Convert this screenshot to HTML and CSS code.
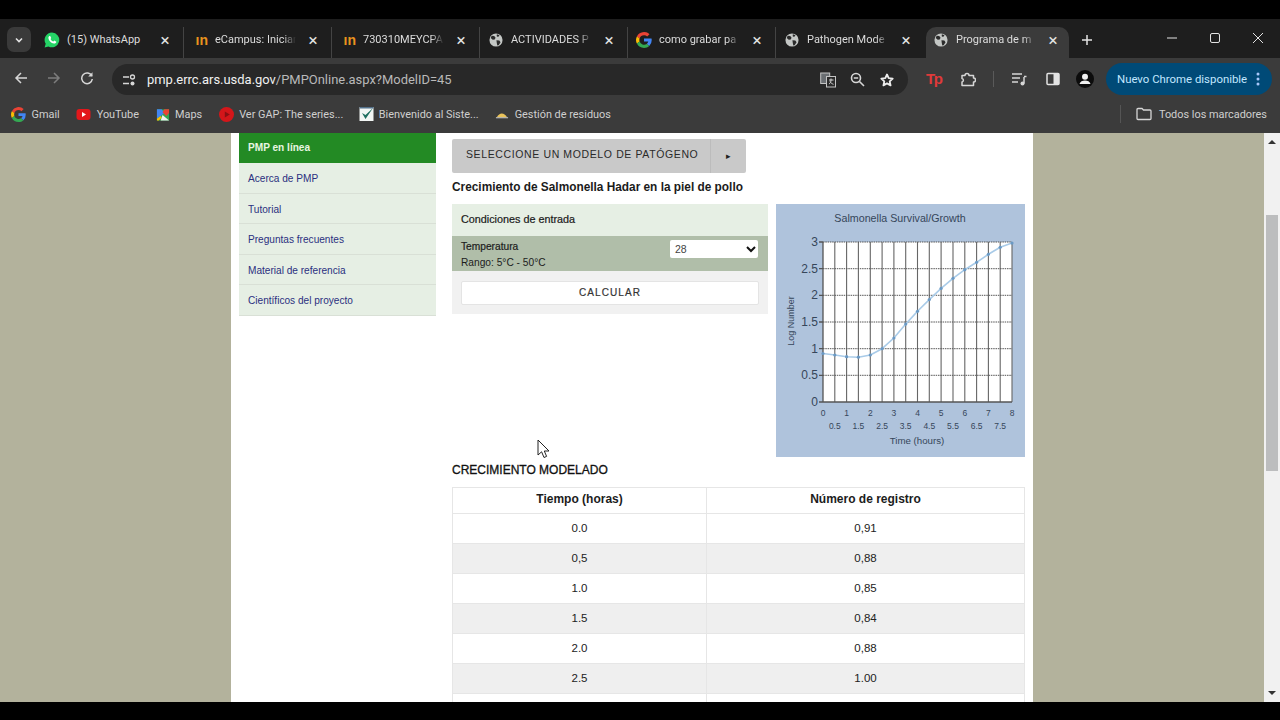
FILE: index.html
```html
<!DOCTYPE html>
<html lang="es">
<head>
<meta charset="utf-8">
<title>Programa de modelado de patógenos</title>
<link rel="stylesheet" href="styles.css">
</head>
<body>
<svg class="defs" width="0" height="0" aria-hidden="true">
  <defs>
    <symbol id="globe" viewBox="0 0 16 16">
      <circle cx="8" cy="8" r="7.5" fill="#c4c7c5"/>
      <path d="M3 3.200l3 .3 1.500 1.800-1 2-2.200.3L2 5.600zM9 1.500l3 1.200-1.600 2-1.600-1zM8.500 8.300l3.300.4 1.400 1.800-2.200 3.500-1.500.3-.6-3z" fill="#2b2b2b"/>
    </symbol>
    <symbol id="g" viewBox="0 0 16 16">
      <path d="M8 3.300a4.700 4.700 0 0 1 3.200 1.200l2.300-2.300A8 8 0 0 0 .9 4.400l2.700 2.100A4.800 4.800 0 0 1 8 3.300z" fill="#ea4335"/>
      <path d="M15.700 8.200c0-.6 0-1.100-.2-1.600H8v3h4.300a3.700 3.700 0 0 1-1.600 2.400l2.600 2a7.800 7.800 0 0 0 2.400-5.800z" fill="#4285f4"/>
      <path d="M3.600 9.500a4.800 4.800 0 0 1 0-3L.9 4.400a8 8 0 0 0 0 7.200z" fill="#fbbc05"/>
      <path d="M8 16c2.200 0 4-.7 5.300-2l-2.600-2a4.800 4.800 0 0 1-7.100-2.500L.9 11.600A8 8 0 0 0 8 16z" fill="#34a853"/>
    </symbol>
  </defs>
</svg>

<div class="topband"></div>

<header class="chrome">
  <div class="tabstrip">
    <button class="tablist" aria-label="Lista de pestañas">
      <svg width="10" height="10" viewBox="0 0 10 10"><path d="M2 3.500l3 3 3-3" fill="none" stroke="#e3e3e3" stroke-width="1.600"/></svg>
    </button>
    <div class="tab">
      <svg class="ficon" width="16" height="16" viewBox="0 0 16 16"><path d="M8 .5a7.400 7.400 0 0 0-6.300 11.200L.6 15.500l3.900-1A7.400 7.400 0 1 0 8 .5z" fill="#25d366"/><path d="M5.500 3.900c-.5.300-1.200 1-1.100 2.200.1 1.600 1.400 3.300 2.700 4.300 1.400 1 2.900 1.500 3.900 1 .9-.4 1.300-1.100 1.300-1.700l-2-1.100-.9 1c-1-.3-2.300-1.400-2.900-2.700l.7-.9-1-2.100z" fill="#fff"/></svg>
      <span class="tabname tabname-full">(15) WhatsApp</span><span class="x">×</span>
    </div>
    <div class="tab">
      <span class="inlogo">ın</span>
      <span class="tabname">eCampus: Iniciar</span><span class="x">×</span>
    </div>
    <div class="tab">
      <span class="inlogo">ın</span>
      <span class="tabname">730310MEYCPA</span><span class="x">×</span>
    </div>
    <div class="tab">
      <svg class="ficon ficon-globe" width="14" height="14"><use href="#globe"/></svg>
      <span class="tabname">ACTIVIDADES P</span><span class="x">×</span>
    </div>
    <div class="tab">
      <svg class="ficon" width="16" height="16"><use href="#g"/></svg>
      <span class="tabname">como grabar pa</span><span class="x">×</span>
    </div>
    <div class="tab tab-last">
      <svg class="ficon ficon-globe" width="14" height="14"><use href="#globe"/></svg>
      <span class="tabname">Pathogen Mode</span><span class="x">×</span>
    </div>
    <div class="tab tab-active">
      <svg class="ficon ficon-globe" width="14" height="14"><use href="#globe"/></svg>
      <span class="tabname">Programa de m</span><span class="x">×</span>
    </div>
    <svg class="plus" width="12" height="12" viewBox="0 0 12 12"><path d="M6 1v10M1 6h10" stroke="#e3e3e3" stroke-width="1.500"/></svg>
    <div class="winctl">
      <svg width="12" height="12" viewBox="0 0 12 12"><path d="M1 6h10" stroke="#e3e3e3"/></svg>
      <svg width="12" height="12" viewBox="0 0 12 12"><rect x="1.500" y="1.500" width="9" height="9" rx="1.500" fill="none" stroke="#e3e3e3"/></svg>
      <svg width="12" height="12" viewBox="0 0 12 12"><path d="M1 1l10 10M11 1L1 11" stroke="#e3e3e3"/></svg>
    </div>
  </div>

  <div class="toolbar">
    <div class="navbtns">
      <svg width="14" height="14" viewBox="0 0 14 14"><path d="M13 7H2M7 2L2 7l5 5" fill="none" stroke="#d6d6d6" stroke-width="1.500"/></svg>
      <svg width="14" height="14" viewBox="0 0 14 14"><path d="M1 7h11M7 2l5 5-5 5" fill="none" stroke="#7d7d7d" stroke-width="1.500"/></svg>
      <svg width="14" height="14" viewBox="0 0 14 14"><path d="M11.800 5A5.300 5.300 0 1 0 12.300 8" fill="none" stroke="#d6d6d6" stroke-width="1.500"/><path d="M12.500 1.200v4.300H8.200z" fill="#d6d6d6"/></svg>
    </div>
    <div class="omnibox">
      <span class="tune"><svg width="16" height="16" viewBox="0 0 16 16"><path d="M2 5h6M2 11.500h6" stroke="#d6d6d6" stroke-width="1.500" fill="none"/><circle cx="11.500" cy="5" r="2" fill="none" stroke="#d6d6d6" stroke-width="1.300"/><circle cx="11.500" cy="11.500" r="2" fill="#d6d6d6"/></svg></span>
      <span class="url"><span class="host">pmp.errc.ars.usda.gov</span>/PMPOnline.aspx?ModelID=45</span>
      <div class="omni-actions">
        <svg width="16" height="16" viewBox="0 0 16 16"><rect x=".7" y="1" width="9" height="10.500" fill="#6a6e72" stroke="#c4c4c4"/><rect x="6.500" y="4.500" width="9" height="10.500" fill="#2b2b2b" stroke="#c4c4c4"/><path d="M9 8h4.500M11 6.500V8c0 2-1 3.500-2 4M10 9.500c.6 1.200 2 2.300 3.500 2.800" stroke="#d6d6d6" fill="none"/></svg>
        <svg width="15" height="15" viewBox="0 0 15 15"><circle cx="6" cy="6" r="4.500" fill="none" stroke="#d6d6d6" stroke-width="1.600"/><path d="M9.500 9.500l4.500 4.500M3.800 6h4.400" stroke="#d6d6d6" stroke-width="1.600"/></svg>
        <svg width="16" height="16" viewBox="0 0 16 16"><path d="M8 2.500l1.700 3.700 4 .4-3 2.800.9 4L8 11.400l-3.600 2 .9-4-3-2.800 4-.4z" fill="none" stroke="#ececec" stroke-width="1.800" stroke-linejoin="round"/></svg>
      </div>
    </div>
    <div class="exts">
      <span class="tp">Tp</span>
      <svg class="ext-puzzle" width="16" height="16" viewBox="0 0 16 16"><path d="M2 4.500h3a2 2 0 0 1 4 0h4.500V7a2 2 0 0 1 0 4v3.500H2V11a1.800 1.800 0 0 0 0-3.500z" fill="none" stroke="#d6d6d6" stroke-width="1.500" stroke-linejoin="round"/></svg>
      <span class="sep"></span>
      <svg class="ext-media" width="16" height="16" viewBox="0 0 16 16"><path d="M1 3h10M1 7h8M1 11h6" stroke="#d6d6d6" stroke-width="1.500"/><path d="M13 6v6.500" stroke="#d6d6d6" stroke-width="1.500"/><circle cx="11.500" cy="12.500" r="2" fill="#d6d6d6"/><path d="M13 5.500h2.500" stroke="#d6d6d6" stroke-width="1.500"/></svg>
      <svg class="ext-side" width="16" height="16" viewBox="0 0 16 16"><rect x="2" y="2.500" width="12" height="11" rx="1" fill="none" stroke="#e3e3e3" stroke-width="1.500"/><rect x="8.500" y="2.500" width="5.500" height="11" fill="#e3e3e3"/></svg>
      <svg class="ext-avatar" width="18" height="18" viewBox="0 0 18 18"><circle cx="9" cy="9" r="9" fill="#0c0c0c"/><circle cx="9" cy="6.800" r="3" fill="#f0f0f0"/><path d="M3.500 14c.5-2.600 3-3.600 5.500-3.600s5 1 5.500 3.600z" fill="#f0f0f0"/></svg>
    </div>
    <div class="update">
      <span>Nuevo Chrome disponible</span>
      <svg width="4" height="14" viewBox="0 0 4 14"><circle cx="2" cy="2" r="1.500" fill="#a8c7fa"/><circle cx="2" cy="7" r="1.500" fill="#a8c7fa"/><circle cx="2" cy="12" r="1.500" fill="#a8c7fa"/></svg>
    </div>
  </div>

  <div class="bookmarks">
    <a class="bm bm-gmail"><svg width="15" height="15"><use href="#g"/></svg>Gmail</a>
    <a class="bm"><svg width="15" height="15" viewBox="0 0 15 15"><rect x=".5" y="2" width="14" height="11" rx="3" fill="#e3171b"/><path d="M6 5l4 2.500L6 10z" fill="#fff"/></svg>YouTube</a>
    <a class="bm"><svg width="14" height="15" viewBox="0 0 15 15"><path d="M1 2h13v12H1z" fill="#34a853"/><path d="M1 2h5l3 4-8 6z" fill="#4285f4"/><path d="M9 2h5v4l-3 3-4-4z" fill="#ea4335"/><path d="M7 8l7 6H5z" fill="#f1f1f1"/><path d="M1 12l4-3 1 2-3 3H1z" fill="#fbbc05"/></svg>Maps</a>
    <a class="bm"><svg width="15" height="15" viewBox="0 0 15 15"><circle cx="7.500" cy="7.500" r="7.500" fill="#d4161a"/><path d="M5.800 4.500l5 3-5 3z" fill="#8a1013"/></svg>Ver GAP: The series...</a>
    <a class="bm bm-check"><svg width="15" height="16" viewBox="0 0 15 16"><rect x=".5" y="1" width="14" height="14" fill="#f2f6f4"/><path d="M3 7l3.500 6L14 2l-7.500 7z" fill="#1f6f60"/><path d="M.5 1h14v1.500H.5z" fill="#52708a"/></svg>Bienvenido al Siste...</a>
    <a class="bm"><svg width="14" height="15" viewBox="0 0 15 15"><path d="M2 10.500c1.500-2.800 3.200-4 5.300-4s3.800 1.200 5.700 4z" fill="#e8c25a"/><path d="M1 10.500h13v1H1z" fill="#d8d8d8"/></svg>Gestión de residuos</a>
    <div class="allbm">
      <span class="sep"></span>
      <a class="bm bm-all"><svg width="16" height="14" viewBox="0 0 16 14"><path d="M1 2.500A1 1 0 0 1 2 1.500h4l1.500 1.500H14a1 1 0 0 1 1 1v7.500a1 1 0 0 1-1 1H2a1 1 0 0 1-1-1z" fill="none" stroke="#d6d6d6" stroke-width="1.300"/></svg>Todos los marcadores</a>
    </div>
  </div>
</header>

<div class="viewport">
  <div class="pagebg">
    <div class="page">
      <nav class="sidebar">
        <a class="side-item side-active">PMP en línea</a>
        <a class="side-item">Acerca de PMP</a>
        <a class="side-item">Tutorial</a>
        <a class="side-item">Preguntas frecuentes</a>
        <a class="side-item">Material de referencia</a>
        <a class="side-item">Científicos del proyecto</a>
      </nav>
      <main class="content">
        <div class="modelbtn">
          <span class="modelbtn-label">SELECCIONE UN MODELO DE PATÓGENO</span>
          <span class="modelbtn-arrow">▸</span>
        </div>
        <h1 class="title">Crecimiento de Salmonella Hadar en la piel de pollo</h1>
        <div class="workarea">
          <section class="inputs">
            <div class="inputs-head">Condiciones de entrada</div>
            <div class="temp-row">
              <div class="temp-label"><b>Temperatura</b><span>Rango: 5°C - 50°C</span></div>
              <div class="fake-select">28
                <svg width="10" height="7" viewBox="0 0 10 7"><path d="M1 1l4 4 4-4" fill="none" stroke="#111" stroke-width="2"/></svg>
              </div>
            </div>
            <div class="calc-wrap"><button class="calc">CALCULAR</button></div>
          </section>
          <figure class="chart">
            <svg width="249" height="253" viewBox="0 0 249 253">
              <rect x="47" y="38" width="189" height="160" fill="#fff"/>
              <path class="gridv" d="M58.800 38V198M70.600 38V198M82.400 38V198M94.300 38V198M106.100 38V198M117.900 38V198M129.700 38V198M141.500 38V198M153.300 38V198M165.100 38V198M177 38V198M188.800 38V198M200.600 38V198M212.400 38V198M224.200 38V198M236 38V198"/>
              <path class="gridh" d="M47 38H236M47 64.700H236M47 91.300H236M47 118H236M47 144.700H236M47 171.300H236"/>
              <path class="axis" d="M47 38V198H236M43 38H47M43 64.700H47M43 91.300H47M43 118H47M43 144.700H47M43 171.300H47M43 198H47"/>
              <polyline class="curve" points="47,149.500 58.800,151 70.600,152.700 82.400,153.200 94.300,151 106.100,144.700 117.900,134 129.700,120.100 141.500,107.300 153.300,95.600 165.100,84.400 177,74.300 188.800,65.700 200.600,58.300 212.400,50.300 224.200,43.300 236,39.100"/>
              <g class="dots">
                <circle cx="47" cy="149.500" r="1.600"/><circle cx="58.800" cy="151" r="1.600"/><circle cx="70.600" cy="152.700" r="1.600"/><circle cx="82.400" cy="153.200" r="1.600"/><circle cx="94.300" cy="151" r="1.600"/><circle cx="106.100" cy="144.700" r="1.600"/><circle cx="117.900" cy="134" r="1.600"/><circle cx="129.700" cy="120.100" r="1.600"/><circle cx="141.500" cy="107.300" r="1.600"/><circle cx="153.300" cy="95.600" r="1.600"/><circle cx="165.100" cy="84.400" r="1.600"/><circle cx="177" cy="74.300" r="1.600"/><circle cx="188.800" cy="65.700" r="1.600"/><circle cx="200.600" cy="58.300" r="1.600"/><circle cx="212.400" cy="50.300" r="1.600"/><circle cx="224.200" cy="43.300" r="1.600"/><circle cx="236" cy="39.100" r="1.600"/>
              </g>
              <text class="c-title" x="124" y="18">Salmonella Survival/Growth</text>
              <g class="c-yt">
                <text x="42" y="42">3</text><text x="42" y="68.500">2.5</text><text x="42" y="95">2</text><text x="42" y="122">1.5</text><text x="42" y="148.500">1</text><text x="42" y="175">0.5</text><text x="42" y="202">0</text>
              </g>
              <g class="c-xt">
                <text x="47" y="212">0</text><text x="70.600" y="212">1</text><text x="94.300" y="212">2</text><text x="117.900" y="212">3</text><text x="141.500" y="212">4</text><text x="165.100" y="212">5</text><text x="188.800" y="212">6</text><text x="212.400" y="212">7</text><text x="236" y="212">8</text>
                <text x="58.800" y="225">0.5</text><text x="82.400" y="225">1.5</text><text x="106.100" y="225">2.5</text><text x="129.700" y="225">3.5</text><text x="153.300" y="225">4.5</text><text x="177" y="225">5.5</text><text x="200.600" y="225">6.5</text><text x="224.200" y="225">7.5</text>
              </g>
              <text class="c-lab c-time" x="141" y="240">Time (hours)</text>
              <text class="c-lab" transform="translate(17.500 117) rotate(-90)">Log Number</text>
            </svg>
          </figure>
        </div>
        <h2 class="subtitle">CRECIMIENTO MODELADO</h2>
        <table class="results">
          <thead>
            <tr><th>Tiempo (horas)</th><th>Número de registro</th></tr>
          </thead>
          <tbody>
            <tr><td>0.0</td><td>0,91</td></tr>
            <tr><td>0,5</td><td>0,88</td></tr>
            <tr><td>1.0</td><td>0,85</td></tr>
            <tr><td>1.5</td><td>0,84</td></tr>
            <tr><td>2.0</td><td>0,88</td></tr>
            <tr><td>2.5</td><td>1.00</td></tr>
            <tr><td></td><td></td></tr>
          </tbody>
        </table>
      </main>
    </div>
    <div class="scrollbar">
      <span class="sb-up"></span>
      <span class="sb-space"></span>
      <span class="sb-thumb"></span>
      <span class="sb-rest"></span>
      <span class="sb-down"></span>
    </div>
  </div>
  <svg class="cursor" width="14" height="20" viewBox="0 0 14 20"><path d="M1 1v15l3.600-3.200L7 18.500l2.600-1.100-2.300-5.400H12z" fill="#fff" stroke="#222" stroke-width="1"/></svg>
</div>

<div class="bottomband"></div>
</body>
</html>
```

FILE: styles.css
```css
* { box-sizing: border-box; }
html, body { margin: 0; padding: 0; width: 1280px; height: 720px; overflow: hidden; background: #000; }
body { display: flex; flex-direction: column; font-family: "Liberation Sans", Arial, sans-serif; }
.defs { position: absolute; }
.topband { height: 19px; background: #000; flex: none; }
.bottomband { height: 18px; background: #000; flex: none; }

/* browser chrome */
.chrome { flex: none; height: 114px; background: #3b3b3b; font-family: Roboto, sans-serif; color: #dcdcdc; }
.tabstrip { height: 39px; background: #1e1e1e; display: flex; align-items: flex-end; padding-left: 7px; position: relative; }
.tablist { width: 24px; height: 25px; margin: 0 5px 6px 0; border: 0; padding: 0; border-radius: 7px; background: #3a3a3a; display: flex; align-items: center; justify-content: center; }
.tab { width: 148px; height: 31px; display: flex; align-items: center; padding: 0 11px 6px 8px; border-right: 1px solid #444; position: relative; font-size: 11px; }
.tab-last { border-right: 0; }
.tab-active { width: 143px; margin-left: 2px; background: #3b3b3b; border-right: 0; border-radius: 10px 10px 0 0; padding-left: 7px; padding-right: 9px; }
.ficon { flex: none; width: 16px; height: 16px; }
.ficon-globe { width: 14px; height: 14px; margin: 0 1px; }
.inlogo { flex: none; width: 16px; font: 700 14px/16px "Liberation Sans", sans-serif; color: #e8931e; text-align: right; }
.tabname { flex: 1; min-width: 0; margin-left: 7px; white-space: nowrap; overflow: hidden; -webkit-mask-image: linear-gradient(90deg, #000 84%, transparent 100%); mask-image: linear-gradient(90deg, #000 84%, transparent 100%); }
.tabname-full { -webkit-mask-image: none; mask-image: none; }
.x { flex: none; width: 14px; margin-left: 10px; text-align: center; font-size: 17px; line-height: 16px; color: #e3e3e3; }
.plus { margin: 0 0 12px 12px; }
.winctl { margin-left: auto; display: flex; gap: 31px; padding-right: 16px; height: 39px; align-items: center; padding-bottom: 1px; align-self: flex-end; }
.toolbar { height: 37px; display: flex; align-items: center; padding: 0 7px 0 0; }
.navbtns { width: 112px; display: flex; gap: 19px; padding-left: 14px; align-items: center; margin-top: 3px; }
.omnibox { width: 796px; height: 31px; border-radius: 16px; background: #282828; display: flex; align-items: center; padding: 0 13px 0 9px; margin-top: 6px; }
.tune { width: 26px; display: flex; }
.url { font-size: 12.950px; color: #b9b9b9; white-space: nowrap; }
.host { color: #f1f1f1; }
.omni-actions { margin-left: auto; display: flex; gap: 14px; align-items: center; }
.exts { width: 199px; display: flex; align-items: center; padding-left: 18px; margin-top: 4px; }
.tp { width: 16px; font: 700 15px/16px "Liberation Sans", sans-serif; letter-spacing: -1.500px; color: #e03a3a; white-space: nowrap; }
.ext-puzzle { margin-left: 18px; }
.exts .sep { height: 16px; width: 1px; background: #5a5a5a; margin: 0 17px; }
.ext-side { margin-left: 18px; }
.ext-avatar { margin-left: 15px; }
.update { width: 166px; height: 32px; flex: none; margin-left: -1px; margin-top: 5px; border-radius: 16px; background: #004a77; color: #c2e7ff; font-size: 11.400px; display: flex; align-items: center; padding: 0 12px 0 11px; justify-content: space-between; white-space: nowrap; }
.bookmarks { height: 38px; display: flex; align-items: center; padding-left: 11px; gap: 16.500px; font-size: 10.900px; color: #cfcfcf; }
.bm { display: flex; align-items: center; gap: 5.500px; white-space: nowrap; }
.bm-check { gap: 5px; margin-left: -1px; }
.allbm { margin-left: auto; display: flex; align-items: center; padding-right: 13px; }
.allbm .sep { height: 18px; width: 1px; background: #555; margin-right: 15px; }
.bm-all { gap: 7px; }

/* page */
.viewport { flex: 1; min-height: 0; position: relative; overflow: hidden; }
.pagebg { height: 100%; display: flex; background: #b3b29c; padding-left: 231px; }
.page { width: 802px; height: 900px; background: #fff; display: flex; padding-left: 8px; gap: 16px; flex: none; font-family: "Liberation Sans", Arial, sans-serif; }
.sidebar { width: 197px; flex: none; align-self: flex-start; }
.side-item { display: block; height: 30.600px; padding: 0 9px; line-height: 31px; font-size: 10.100px; color: #2b2f80; background: #e6efe4; border-bottom: 1px solid #d9e0d6; }
.side-active { height: 30px; line-height: 29px; background: #238a24; color: #e8f5e0; font-weight: 700; border-bottom: 0; }
.content { width: 573px; flex: none; padding-top: 6px; }
.modelbtn { width: 294px; height: 34px; background: #c9c9c9; display: flex; align-items: center; border-radius: 2px; }
.modelbtn-label { width: 259px; padding-left: 14px; font-size: 10.500px; letter-spacing: .62px; color: #2a2a2a; line-height: 30px; height: 34px; border-right: 1px solid #bcbcbc; white-space: nowrap; }
.modelbtn-arrow { flex: 1; text-align: center; font-size: 9px; color: #222; }
.title { margin: 7px 0 0; height: 24px; font-size: 11.850px; line-height: 15px; font-weight: 700; color: #1b1b1b; }
.workarea { display: flex; gap: 8px; align-items: flex-start; }
.inputs { width: 316px; height: 110px; background: #f1f1f1; }
.inputs-head { height: 32px; background: #e6efe4; padding-left: 9px; font-size: 10.800px; line-height: 30px; color: #1a1a1a; -webkit-text-stroke: .2px #1a1a1a; }
.temp-row { height: 35px; background: #b0bea9; padding: 3px 10px 0 9px; display: flex; justify-content: space-between; }
.temp-label { display: flex; flex-direction: column; font-size: 10.200px; line-height: 15.500px; color: #1c1c1c; }
.temp-label b { font-weight: 400; -webkit-text-stroke: .2px #1c1c1c; }
.fake-select { width: 88px; height: 18px; margin-top: 1px; background: #fff; border-radius: 2px; display: flex; align-items: center; justify-content: space-between; padding: 0 2px 0 5px; font-size: 10.500px; color: #444; }
.calc-wrap { padding: 10px 9px 0; }
.calc { display: block; width: 298px; height: 24px; border: 1px solid #e4e4e4; border-radius: 2px; background: #fff; font: 400 10px/20px "Liberation Sans", sans-serif; letter-spacing: 1.100px; color: #333; -webkit-text-stroke: .2px #333; padding: 0; }
.chart { width: 249px; height: 253px; margin: 0; background: #afc3dc; }
.chart svg { display: block; }
.gridv { stroke: #666; stroke-width: 1.100; fill: none; }
.gridh { stroke: #555; stroke-width: 1; stroke-dasharray: 1.500 .8; fill: none; }
.axis { stroke: #555; stroke-width: 1.300; fill: none; }
.curve { stroke: #a9cbe8; stroke-width: 1.600; fill: none; stroke-linejoin: round; }
.dots { fill: #6a99c4; }
.chart text { font-family: "Liberation Sans", sans-serif; fill: #36465a; }
.c-title { font-size: 10.700px; text-anchor: middle; }
.c-yt text { font-size: 12px; text-anchor: end; }
.c-xt text { font-size: 8.500px; text-anchor: middle; }
.c-lab { font-size: 9px; text-anchor: middle; }
.chart .c-time { font-size: 9.700px; }
.subtitle { margin: 5px 0 0; height: 25px; font-size: 12px; line-height: 16px; font-weight: 400; -webkit-text-stroke: .3px #111; color: #111; }
.results { width: 573px; border-collapse: collapse; table-layout: fixed; font-size: 11.500px; color: #222; }
.results th, .results td { border: 1px solid #e6e6e6; text-align: center; padding: 0 0 2px; }
.results th { height: 26px; font-weight: 700; font-size: 12px; color: #1c1c1c; padding-bottom: 3px; }
.results td { height: 30px; }
.results tbody tr:nth-child(even) td { background: #efefef; }
.results th:first-child { width: 254px; }

/* scrollbar */
.scrollbar { position: absolute; left: 1264px; top: 0; bottom: 0; width: 16px; background: #f1f1f1; display: flex; flex-direction: column; align-items: center; }
.sb-up, .sb-down { flex: none; width: 0; height: 0; margin: 7px 0; border-left: 4px solid transparent; border-right: 4px solid transparent; }
.sb-up { border-bottom: 4px solid #333; }
.sb-down { border-top: 4px solid #333; }
.sb-space { height: 64px; flex: none; }
.sb-thumb { width: 12px; height: 256px; flex: none; background: #bcbdbe; }
.sb-rest { flex: 1; }
.cursor { position: absolute; left: 537px; top: 306px; }
```
